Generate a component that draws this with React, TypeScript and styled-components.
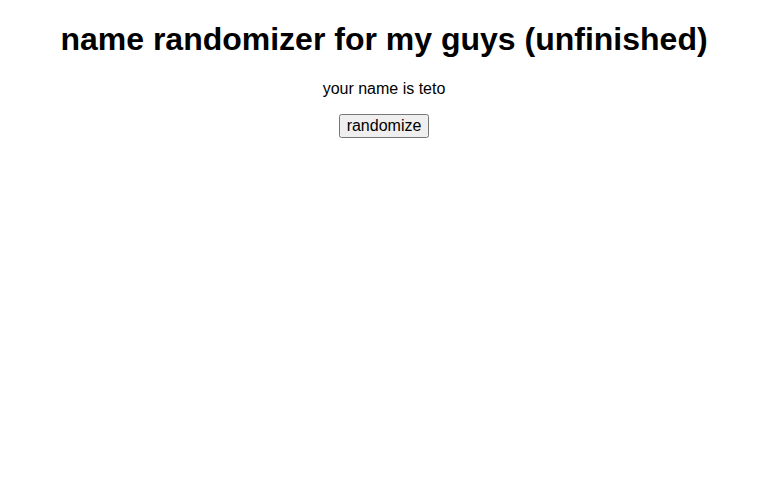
import React, { useState } from "react";
import styled, { createGlobalStyle } from "styled-components";

const GlobalStyle = createGlobalStyle`
  body {
    margin: 0 8px 8px;
    background: #ffffff;
    color: #000000;
    font-family: "Liberation Sans", Arial, sans-serif;
  }
`;

const Page = styled.main`
  text-align: center;
`;

const Title = styled.h1`
  font-size: 32px;
  font-weight: bold;
  margin: 21.44px 0;
`;

const Result = styled.p`
  font-size: 16px;
  margin: 16px 0;
`;

const RandomizeButton = styled.button`
  font-family: "Liberation Sans", Arial, sans-serif;
  font-size: 16px;
  color: #000000;
`;

const NAMES = ["teto", "miku", "neru", "rin", "len"];

export default function App() {
  const [name, setName] = useState("teto");

  const randomize = () => {
    setName(NAMES[Math.floor(Math.random() * NAMES.length)]);
  };

  return (
    <Page>
      <GlobalStyle />
      <Title>name randomizer for my guys (unfinished)</Title>
      <Result>your name is {name}</Result>
      <RandomizeButton onClick={randomize}>randomize</RandomizeButton>
    </Page>
  );
}
